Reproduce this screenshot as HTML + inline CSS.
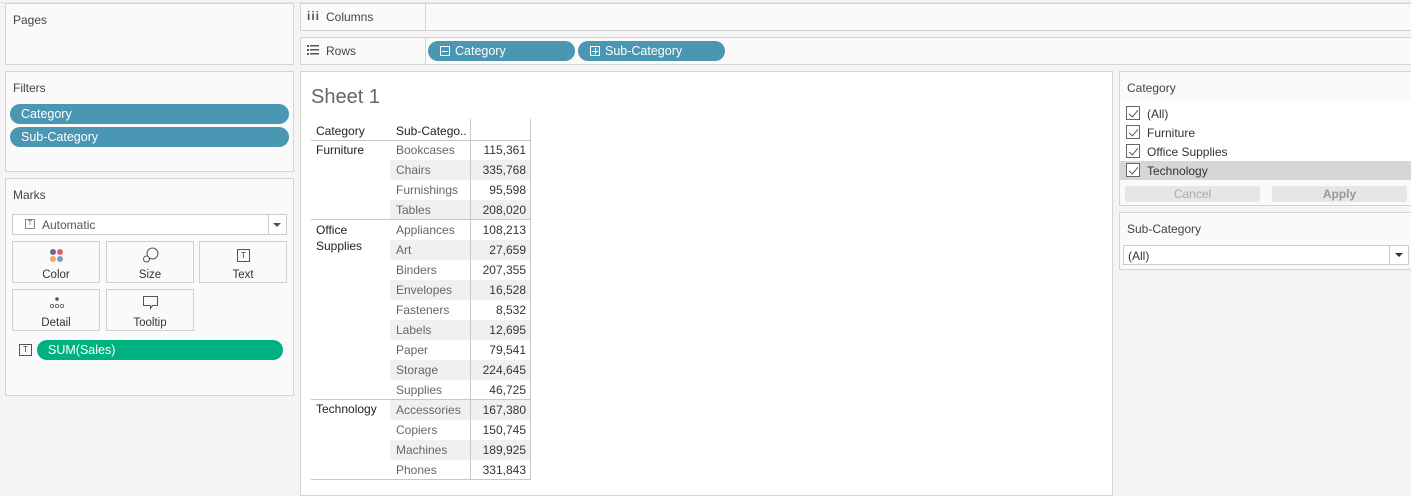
<!DOCTYPE html>
<html><head><meta charset="utf-8"><style>
*{box-sizing:border-box;margin:0;padding:0}
body{width:1411px;height:490px;background:#f4f4f4;font-family:"Liberation Sans",sans-serif;font-size:12px;color:#333;position:relative;overflow:hidden}
.a{position:absolute}
.pan{position:absolute;background:#fafafa;border:1px solid #d4d4d4}
.ttl{position:absolute;left:7px;top:9px;font-size:12px;color:#444}
.pill{position:absolute;background:#4a96b3;color:#fff;border-radius:10px;height:20px;line-height:20px;font-size:12.5px;padding-left:11px}
.btn{position:absolute;background:#fafafa;border:1px solid #d0d0d0;width:88px;height:42px;text-align:center;font-size:11.5px;color:#333}
.btn span{position:absolute;left:0;right:0;top:27px}
.c{position:absolute;font-size:12px;white-space:nowrap}
.g{color:#666}
.k{color:#222}
.stripe{position:absolute;left:390px;width:140px;height:20px;background:#f0f0f0}
.num{position:absolute;left:470px;width:56px;text-align:right;color:#333}
.cb{position:absolute;left:1126px;width:14px;height:14px;border:1px solid #666;background:#fff}
.cb:after{content:"";position:absolute;left:4px;top:1px;width:4px;height:8px;border:solid #555;border-width:0 1.5px 1.5px 0;transform:rotate(40deg)}
.cl{position:absolute;left:1147px;font-size:12px;color:#333}
</style></head><body>
<div class="a" style="left:0;top:0;width:1411px;height:3px;background:#f4f4f4;border-bottom:1px solid #e4e4e4"></div>
<div class="pan" style="left:5px;top:3px;width:289px;height:62px"><div class="ttl">Pages</div></div>
<div class="pan" style="left:5px;top:71px;width:289px;height:101px"><div class="ttl">Filters</div></div>
<div class="pill" style="left:10px;top:104px;width:279px">Category</div>
<div class="pill" style="left:10px;top:127px;width:279px">Sub-Category</div>
<div class="pan" style="left:5px;top:178px;width:289px;height:218px"><div class="ttl">Marks</div></div>
<div class="a" style="left:12px;top:214px;width:275px;height:21px;background:#fff;border:1px solid #ccc"></div>
<div class="a" style="left:25px;top:219px;width:10px;height:10px;border:1px solid #888;font-size:7px;line-height:8px;text-align:center;color:#666">T</div>
<div class="a" style="left:42px;top:218px;font-size:12px;color:#555">Automatic</div>
<div class="a" style="left:268px;top:215px;width:1px;height:19px;background:#ccc"></div>
<div class="a" style="left:273px;top:223px;width:0;height:0;border-left:4px solid transparent;border-right:4px solid transparent;border-top:4px solid #555"></div>
<div class="btn" style="left:12px;top:241px"><svg class="a" style="left:36px;top:6px" width="16" height="16"><circle cx="4" cy="4" r="3" fill="#7b639a"/><circle cx="11" cy="4" r="3" fill="#ea5a6e"/><circle cx="4" cy="11" r="3" fill="#f0a66e"/><circle cx="11" cy="11" r="3" fill="#7a9cc9"/></svg><span>Color</span></div>
<div class="btn" style="left:106px;top:241px"><svg class="a" style="left:35px;top:4px" width="18" height="18"><circle cx="10.5" cy="7.5" r="5.5" fill="none" stroke="#555"/><circle cx="4.5" cy="13" r="3" fill="#fafafa" stroke="#555"/></svg><span>Size</span></div>
<div class="btn" style="left:199px;top:241px"><div class="a" style="left:37px;top:7px;width:13px;height:13px;border:1px solid #555;font-size:8px;line-height:11px;color:#444">T</div><span>Text</span></div>
<div class="btn" style="left:12px;top:289px"><svg class="a" style="left:36px;top:6px" width="16" height="14"><circle cx="8" cy="3" r="1.8" fill="#555"/><circle cx="3" cy="10" r="1.6" fill="none" stroke="#555" stroke-width=".8"/><circle cx="8" cy="10" r="1.6" fill="none" stroke="#555" stroke-width=".8"/><circle cx="13" cy="10" r="1.6" fill="none" stroke="#555" stroke-width=".8"/></svg><span>Detail</span></div>
<div class="btn" style="left:106px;top:289px"><svg class="a" style="left:35px;top:5px" width="18" height="16"><path d="M1.5 1.5h14v9h-5l-2 3v-3h-7z" fill="none" stroke="#555"/></svg><span>Tooltip</span></div>
<div class="a" style="left:19px;top:344px;width:13px;height:12px;border:1px solid #555;font-size:8px;line-height:10px;text-align:center;color:#444">T</div>
<div class="pill" style="left:37px;top:340px;width:246px;background:#00b180">SUM(Sales)</div>
<div class="pan" style="left:300px;top:3px;width:1115px;height:28px"></div>
<div class="a" style="left:425px;top:4px;width:1px;height:26px;background:#d4d4d4"></div>
<div class="a" style="left:307px;top:9px;font-size:12px;font-weight:bold;color:#555;letter-spacing:1px">iii</div>
<div class="a" style="left:326px;top:10px;font-size:12px;color:#444">Columns</div>
<div class="pan" style="left:300px;top:37px;width:1115px;height:28px"></div>
<div class="a" style="left:425px;top:38px;width:1px;height:26px;background:#d4d4d4"></div>
<svg class="a" style="left:307px;top:45px" width="12" height="10"><g fill="#555"><rect x="0" y="0" width="2" height="2"/><rect x="3" y="0" width="9" height="1.5"/><rect x="0" y="4" width="2" height="2"/><rect x="3" y="4" width="9" height="1.5"/><rect x="0" y="8" width="2" height="2"/><rect x="3" y="8" width="9" height="1.5"/></g></svg>
<div class="a" style="left:326px;top:44px;font-size:12px;color:#444">Rows</div>
<div class="pill" style="left:428px;top:41px;width:147px;padding-left:27px">Category</div>
<div class="a" style="left:440px;top:46px;width:10px;height:10px;border:1px solid #fff"><div class="a" style="left:1px;top:3.5px;width:6px;height:1px;background:#fff"></div></div>
<div class="pill" style="left:578px;top:41px;width:147px;padding-left:27px">Sub-Category</div>
<div class="a" style="left:590px;top:46px;width:10px;height:10px;border:1px solid #fff"><div class="a" style="left:1px;top:3.5px;width:6px;height:1px;background:#fff"></div><div class="a" style="left:3.5px;top:1px;width:1px;height:6px;background:#fff"></div></div>
<div class="a" style="left:300px;top:71px;width:813px;height:425px;background:#fff;border:1px solid #d4d4d4"></div>
<div class="a" style="left:311px;top:86px;font-size:20px;color:#666;font-weight:300">Sheet 1</div>
<div class="stripe" style="top:160px"></div><div class="stripe" style="top:200px"></div>
<div class="stripe" style="top:240px"></div><div class="stripe" style="top:280px"></div>
<div class="stripe" style="top:320px"></div><div class="stripe" style="top:360px"></div>
<div class="stripe" style="top:400px"></div><div class="stripe" style="top:440px"></div>
<div class="a" style="left:470px;top:119px;width:1px;height:361px;background:#c8c8c8"></div>
<div class="a" style="left:530px;top:119px;width:1px;height:361px;background:#c8c8c8"></div>
<div class="a" style="left:311px;top:140px;width:220px;height:1px;background:#c8c8c8"></div>
<div class="a" style="left:311px;top:219px;width:220px;height:1px;background:#c8c8c8"></div>
<div class="a" style="left:311px;top:399px;width:220px;height:1px;background:#c8c8c8"></div>
<div class="a" style="left:311px;top:479px;width:220px;height:1px;background:#c8c8c8"></div>
<div class="c k" style="left:316px;top:124px">Category</div>
<div class="c k" style="left:396px;top:124px">Sub-Catego..</div>
<div class="c k" style="left:316px;top:143px">Furniture</div>
<div class="c k" style="left:316px;top:222px;line-height:16px">Office<br>Supplies</div>
<div class="c k" style="left:316px;top:402px">Technology</div>
<div class="pan" style="left:1119px;top:71px;width:296px;height:135px"><div class="ttl" style="top:9px">Category</div></div>
<div class="a" style="left:1120px;top:101px;width:291px;height:60px;background:#fff"></div>
<div class="a" style="left:1120px;top:161px;width:291px;height:19px;background:#d6d6d6"></div>
<div class="cb" style="top:106px"></div><div class="cl" style="top:107px">(All)</div>
<div class="cb" style="top:125px"></div><div class="cl" style="top:126px">Furniture</div>
<div class="cb" style="top:144px"></div><div class="cl" style="top:145px">Office Supplies</div>
<div class="cb" style="top:163px"></div><div class="cl" style="top:164px">Technology</div>
<div class="a" style="left:1125px;top:186px;width:135px;height:16px;background:#e6e6e6;border-radius:2px;text-align:center;color:#aaa;line-height:16px">Cancel</div>
<div class="a" style="left:1272px;top:186px;width:135px;height:16px;background:#e6e6e6;border-radius:2px;text-align:center;color:#999;line-height:16px;font-weight:bold">Apply</div>
<div class="pan" style="left:1119px;top:212px;width:296px;height:58px"><div class="ttl" style="top:9px">Sub-Category</div></div>
<div class="a" style="left:1123px;top:245px;width:286px;height:20px;background:#fff;border:1px solid #ccc"></div>
<div class="a" style="left:1128px;top:249px;color:#333">(All)</div>
<div class="a" style="left:1389px;top:246px;width:1px;height:18px;background:#ccc"></div>
<div class="a" style="left:1395px;top:253px;width:0;height:0;border-left:4px solid transparent;border-right:4px solid transparent;border-top:4px solid #333"></div>
<div class="c g" style="left:396px;top:143px">Bookcases</div><div class="num c" style="top:143px">115,361</div>
<div class="c g" style="left:396px;top:163px">Chairs</div><div class="num c" style="top:163px">335,768</div>
<div class="c g" style="left:396px;top:183px">Furnishings</div><div class="num c" style="top:183px">95,598</div>
<div class="c g" style="left:396px;top:203px">Tables</div><div class="num c" style="top:203px">208,020</div>
<div class="c g" style="left:396px;top:223px">Appliances</div><div class="num c" style="top:223px">108,213</div>
<div class="c g" style="left:396px;top:243px">Art</div><div class="num c" style="top:243px">27,659</div>
<div class="c g" style="left:396px;top:263px">Binders</div><div class="num c" style="top:263px">207,355</div>
<div class="c g" style="left:396px;top:283px">Envelopes</div><div class="num c" style="top:283px">16,528</div>
<div class="c g" style="left:396px;top:303px">Fasteners</div><div class="num c" style="top:303px">8,532</div>
<div class="c g" style="left:396px;top:323px">Labels</div><div class="num c" style="top:323px">12,695</div>
<div class="c g" style="left:396px;top:343px">Paper</div><div class="num c" style="top:343px">79,541</div>
<div class="c g" style="left:396px;top:363px">Storage</div><div class="num c" style="top:363px">224,645</div>
<div class="c g" style="left:396px;top:383px">Supplies</div><div class="num c" style="top:383px">46,725</div>
<div class="c g" style="left:396px;top:403px">Accessories</div><div class="num c" style="top:403px">167,380</div>
<div class="c g" style="left:396px;top:423px">Copiers</div><div class="num c" style="top:423px">150,745</div>
<div class="c g" style="left:396px;top:443px">Machines</div><div class="num c" style="top:443px">189,925</div>
<div class="c g" style="left:396px;top:463px">Phones</div><div class="num c" style="top:463px">331,843</div>
</body></html>
